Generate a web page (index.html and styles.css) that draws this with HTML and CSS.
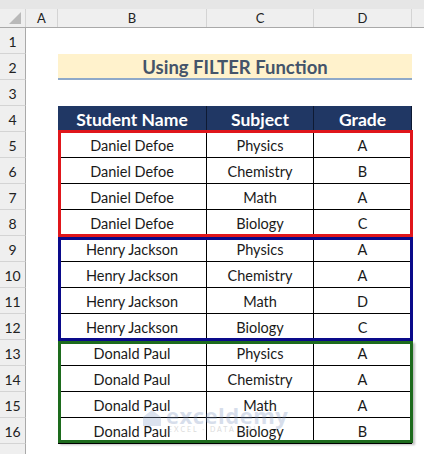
FILE: index.html
```html
<!DOCTYPE html>
<html>
<head>
<meta charset="utf-8">
<link rel="stylesheet" href="styles.css">
</head>
<body>
<div class="sheet">
  <div class="topband"></div>
  <div class="row colhead">
    <div class="corner"><span class="tri"></span></div>
    <div class="ch">A</div>
    <div class="ch">B</div>
    <div class="ch">C</div>
    <div class="ch">D</div>
    <div class="ch last"></div>
  </div>
  <div class="row"><div class="rh">1</div><div></div><div></div><div></div><div></div><div></div></div>
  <div class="row"><div class="rh">2</div><div></div><div class="title">Using FILTER Function</div><div></div></div>
  <div class="row"><div class="rh">3</div><div></div><div></div><div></div><div></div><div></div></div>
  <div class="row"><div class="rh">4</div><div></div><div class="th">Student Name</div><div class="th">Subject</div><div class="th">Grade</div><div></div></div>
  <div class="row"><div class="rh">5</div><div></div><div class="td">Daniel Defoe</div><div class="td">Physics</div><div class="td">A</div><div></div></div>
  <div class="row"><div class="rh">6</div><div></div><div class="td">Daniel Defoe</div><div class="td">Chemistry</div><div class="td">B</div><div></div></div>
  <div class="row"><div class="rh">7</div><div></div><div class="td">Daniel Defoe</div><div class="td">Math</div><div class="td">A</div><div></div></div>
  <div class="row"><div class="rh">8</div><div></div><div class="td">Daniel Defoe</div><div class="td">Biology</div><div class="td">C</div><div></div></div>
  <div class="row"><div class="rh">9</div><div></div><div class="td">Henry Jackson</div><div class="td">Physics</div><div class="td">A</div><div></div></div>
  <div class="row"><div class="rh">10</div><div></div><div class="td">Henry Jackson</div><div class="td">Chemistry</div><div class="td">A</div><div></div></div>
  <div class="row"><div class="rh">11</div><div></div><div class="td">Henry Jackson</div><div class="td">Math</div><div class="td">D</div><div></div></div>
  <div class="row"><div class="rh">12</div><div></div><div class="td">Henry Jackson</div><div class="td">Biology</div><div class="td">C</div><div></div></div>
  <div class="row"><div class="rh">13</div><div></div><div class="td">Donald Paul</div><div class="td">Physics</div><div class="td">A</div><div></div></div>
  <div class="row"><div class="rh">14</div><div></div><div class="td">Donald Paul</div><div class="td">Chemistry</div><div class="td">A</div><div></div></div>
  <div class="row"><div class="rh">15</div><div></div><div class="td">Donald Paul</div><div class="td">Math</div><div class="td">A</div><div></div></div>
  <div class="row"><div class="rh">16</div><div></div><div class="td">Donald Paul</div><div class="td">Biology</div><div class="td">B</div><div></div></div>
  <div class="row"><div class="rh"></div><div></div><div></div><div></div><div></div><div></div></div>

  <div class="box red"></div>
  <div class="box blue"></div>
  <div class="box green"></div>

  <div class="watermark">
    <svg class="wm-icon" width="20" height="18" viewBox="0 0 20 18"><path d="M1 17 L1 8 L10 1 L19 8 L19 17 Z" fill="#8aa2c8"/></svg>
    <div class="wm-text">
      <div class="wm-main">exceldemy</div>
      <div class="wm-sub">EXCEL · DATA · BI</div>
    </div>
  </div>
</div>
</body>
</html>
```

FILE: styles.css
```css
* { box-sizing: border-box; }
html, body { margin: 0; padding: 0; background: #fff; }
body { font-family: "Lato", "Open Sans", sans-serif; width: 424px; height: 454px; overflow: hidden; }

.sheet { position: relative; width: 424px; }

.topband { height: 9px; background: #e6e6e6; }

.row {
  display: grid;
  grid-template-columns: 26px 32px 149px 107px 98px 1fr;
  height: 26px;
}

.colhead {
  height: 19px;
  background: #efefef;
  border-bottom: 1px solid #a9a9a9;
}
.corner { position: relative; border-right: 1px solid #d4d4d4; }
.tri {
  position: absolute; right: 4px; bottom: 3px;
  width: 0; height: 0;
  border-left: 12px solid transparent;
  border-bottom: 12px solid #b9b9b9;
}
.ch {
  font-size: 13px; color: #222;
  display: flex; align-items: center; justify-content: center;
  border-right: 1px solid #d4d4d4;
}
.ch.last { border-right: none; }

.rh {
  background: #efefef;
  border-right: 1px solid #a9a9a9;
  border-bottom: 1px solid #d4d4d4;
  font-size: 14px; color: #222;
  display: flex; align-items: flex-end; justify-content: center;
  padding-bottom: 3px;
}

.title {
  grid-column: 3 / 6;
  background: #fff2cc;
  border-bottom: 2px solid #8ea9c9;
  color: #44546a;
  font-weight: 700;
  font-size: 18.5px;
  display: flex; align-items: center; justify-content: center;
  padding-top: 1px;
}

.th {
  background: #203764;
  color: #fff;
  font-weight: 700;
  font-size: 17.5px;
  display: flex; align-items: center; justify-content: center;
  border-right: 1px solid #0e1a33;
  border-bottom: 1px solid #000;
  padding-top: 2px;
}

.td {
  color: #1a1a1a;
  font-size: 14.5px;
  display: flex; align-items: center; justify-content: center;
  border-right: 1px solid #000;
  border-bottom: 1px solid #000;
  padding-top: 2px;
}

.box {
  position: absolute;
  left: 58px;
  width: 355px;
  border: 3px solid;
}
.red { top: 130px; height: 107px; border-color: #e0161b; }
.blue { top: 237px; height: 104px; border-color: #0a0a8a; }
.green { top: 341px; height: 102px; border-color: #1d6b1d; box-shadow: 2px 2px 2px rgba(0,0,0,0.25); }

.watermark {
  position: absolute;
  left: 142px; top: 406px;
  display: flex; align-items: flex-start; gap: 4px;
  opacity: 0.3;
  pointer-events: none;
}
.wm-icon { margin-top: 3px; }
.wm-main { font-size: 22px; font-weight: 700; color: #7d95c0; line-height: 19px; font-family: "Open Sans", sans-serif; letter-spacing: 0.5px; }
.wm-sub { font-size: 7px; line-height: 9px; color: #8a8a8a; letter-spacing: 2px; margin-left: 2px; }
```
